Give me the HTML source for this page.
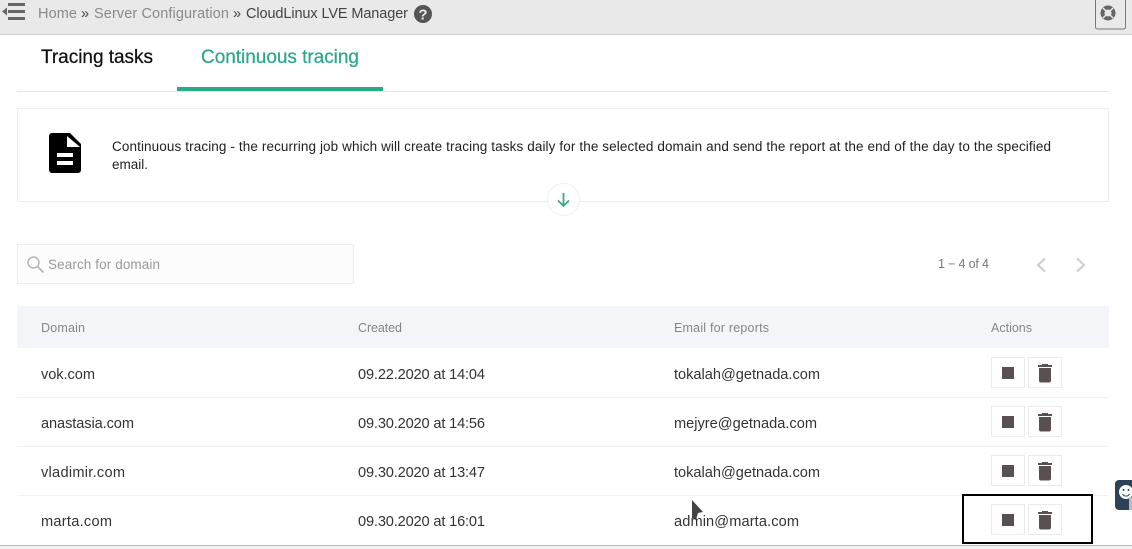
<!DOCTYPE html>
<html><head><meta charset="utf-8">
<style>
html,body{margin:0;padding:0;background:#fff;width:1132px;height:549px;overflow:hidden}
svg{display:block}
text{font-family:"Liberation Sans",sans-serif;font-size:13.5px;fill:#333}
.h{fill:#858585;font-size:12.5px}
.b{fill:#8a8a8a;font-size:14.5px}
.c{fill:#444;font-size:14.5px}
.t{font-size:19px;stroke-width:.25px}
.r{font-size:14.6px;fill:#333}
.btn{fill:#fff;stroke:#ebebeb;stroke-width:1}
.ic{fill:#5a5052}
</style></head><body>
<svg width="1132" height="549" viewBox="0 0 1132 549" xmlns="http://www.w3.org/2000/svg">
<defs>
<g id="acts">
<rect class="btn" x="991.5" y="0.5" width="33" height="30"/>
<rect class="btn" x="1028.5" y="0.5" width="33" height="30"/>
<rect class="ic" x="1002" y="10" width="12" height="12"/>
<path class="ic" d="M1038 8h14v2h-14zM1042 7h6v1h-6zM1039 11h12v12.500a2 2 0 0 1-2 2h-8a2 2 0 0 1-2-2z"/>
</g>
</defs>
<!-- top bar -->
<rect x="0" y="0" width="1132" height="34" fill="#e9e9e9"/>
<rect x="0" y="34" width="1132" height="1" fill="#cfcfcf"/>
<path d="M8 3h17v3H8zM8 10h17v3H8zM8 17h17v3H8z" fill="#666"/>
<path d="M2 11.500l5-4v8z" fill="#666"/>
<text class="b" x="38" y="18" textLength="39" lengthAdjust="spacing">Home</text>
<text class="c" x="81" y="18" textLength="8">»</text>
<text class="b" x="94" y="18" textLength="135" lengthAdjust="spacing">Server Configuration</text>
<text class="c" x="233" y="18" textLength="8">»</text>
<text class="c" x="246" y="18" textLength="162" lengthAdjust="spacing">CloudLinux LVE Manager</text>
<circle cx="423" cy="14" r="9" fill="#555"/>
<text x="423" y="19.500" text-anchor="middle" style="font-size:15px;font-weight:bold;fill:#e9e9e9">?</text>
<path d="M1095.500 0v27a2 2 0 0 0 2 2h26a2 2 0 0 0 2-2V0" fill="none" stroke="#777" stroke-width="1"/>
<circle cx="1108" cy="13" r="7.500" fill="#666"/>
<circle cx="1108" cy="13" r="3.500" fill="#e9e9e9"/>
<path d="M1103 8l3 3M1113 8l-3 3M1103 18l3-3M1113 18l-3-3" stroke="#e9e9e9" stroke-width="1.500"/>
<!-- tabs -->
<text class="t" x="41" y="63" textLength="112" lengthAdjust="spacing" style="fill:#111;stroke:#111">Tracing tasks</text>
<text class="t" x="201" y="63" textLength="158" lengthAdjust="spacing" style="fill:#2ba888;stroke:#2ba888">Continuous tracing</text>
<rect x="17" y="91" width="1092" height="1" fill="#e4e4e4"/>
<rect x="177" y="87" width="206" height="4" fill="#2ba888"/>
<!-- info box -->
<rect x="17.500" y="108.500" width="1091" height="93" rx="1" fill="#fff" stroke="#ececec"/>
<path d="M52 133h18l11 11v26a3 3 0 0 1-3 3H52a3 3 0 0 1-3-3v-34a3 3 0 0 1 3-3z" fill="#000"/>
<path d="M67 136l13 11H67z" fill="#fff"/>
<path d="M57 153h16v4H57zM57 161h16v4H57z" fill="#fff"/>
<text x="112" y="151" textLength="939" lengthAdjust="spacing" style="fill:#222">Continuous tracing - the recurring job which will create tracing tasks daily for the selected domain and send the report at the end of the day to the specified</text>
<text x="112" y="169" textLength="36" lengthAdjust="spacing" style="fill:#222">email.</text>
<circle cx="563.500" cy="199.500" r="16" fill="#fff" stroke="#efefef"/>
<path d="M563.500 193v12.500M558 200.500l5.500 5.500 5.500-5.500" fill="none" stroke="#3aa88a" stroke-width="1.800"/>
<!-- search -->
<rect x="17.500" y="244.500" width="336" height="39" rx="1" fill="#fcfcfc" stroke="#ececec"/>
<circle cx="33.500" cy="262.500" r="5.500" fill="none" stroke="#b5b5b5" stroke-width="1.500"/>
<path d="M37.500 266.500l6 6" stroke="#b5b5b5" stroke-width="1.800"/>
<text x="48" y="269" textLength="112" lengthAdjust="spacing" style="fill:#999">Search for domain</text>
<text x="938" y="268" textLength="51" lengthAdjust="spacing" style="fill:#777;font-size:12.5px">1 − 4 of 4</text>
<path d="M1045 258.500l-7 6.500 7 6.500M1077 258.500l7 6.500-7 6.500" fill="none" stroke="#ccc" stroke-width="2"/>
<!-- table -->
<rect x="17" y="306" width="1092" height="42" fill="#f4f5f9"/>
<text class="h" x="41" y="332" textLength="44" lengthAdjust="spacing">Domain</text>
<text class="h" x="358" y="332" textLength="44" lengthAdjust="spacing">Created</text>
<text class="h" x="674" y="332" textLength="95" lengthAdjust="spacing">Email for reports</text>
<text class="h" x="991" y="332" textLength="41" lengthAdjust="spacing">Actions</text>
<rect x="17" y="397" width="1092" height="1" fill="#f1f1f1"/>
<rect x="17" y="446" width="1092" height="1" fill="#f1f1f1"/>
<rect x="17" y="495" width="1092" height="1" fill="#f1f1f1"/>

<!-- cursor -->
<path d="M692 500l11 12-5 1-2 7-4-2z" fill="#444"/>

<text class="r" x="41" y="379" textLength="54" lengthAdjust="spacing">vok.com</text>
<text class="r" x="358" y="379" textLength="127" lengthAdjust="spacing">09.22.2020 at 14:04</text>
<text class="r" x="674" y="379" textLength="146" lengthAdjust="spacing">tokalah@getnada.com</text>
<text class="r" x="41" y="428" textLength="93" lengthAdjust="spacing">anastasia.com</text>
<text class="r" x="358" y="428" textLength="127" lengthAdjust="spacing">09.30.2020 at 14:56</text>
<text class="r" x="674" y="428" textLength="143" lengthAdjust="spacing">mejyre@getnada.com</text>
<text class="r" x="41" y="477" textLength="84" lengthAdjust="spacing">vladimir.com</text>
<text class="r" x="358" y="477" textLength="127" lengthAdjust="spacing">09.30.2020 at 13:47</text>
<text class="r" x="674" y="477" textLength="146" lengthAdjust="spacing">tokalah@getnada.com</text>
<text class="r" x="41" y="526" textLength="71" lengthAdjust="spacing">marta.com</text>
<text class="r" x="358" y="526" textLength="127" lengthAdjust="spacing">09.30.2020 at 16:01</text>
<text class="r" x="674" y="526" textLength="125" lengthAdjust="spacing">admin@marta.com</text>

<use href="#acts" x="0" y="357"/>
<use href="#acts" x="0" y="406"/>
<use href="#acts" x="0" y="455"/>
<use href="#acts" x="0" y="504"/>

<!-- highlight -->
<rect x="963" y="495" width="129" height="48" fill="none" stroke="#000" stroke-width="2"/>
<!-- bottom -->
<rect x="0" y="545" width="1132" height="1" fill="#bbb"/>
<rect x="0" y="546" width="1132" height="3" fill="#f2f2f2"/>
<!-- chat -->
<rect x="1115" y="480" width="24" height="30" rx="4" fill="#2b4257"/>
<circle cx="1126" cy="492" r="7" fill="#fff"/>
<circle cx="1123.500" cy="490" r="1" fill="#2b4257"/>
<circle cx="1128.500" cy="490" r="1" fill="#2b4257"/>
<path d="M1122.500 494a4 4 0 0 0 7 0" fill="none" stroke="#2b4257"/>
<rect x="1129" y="497" width="3" height="13" fill="#bbb"/>
</svg>
</body></html>
